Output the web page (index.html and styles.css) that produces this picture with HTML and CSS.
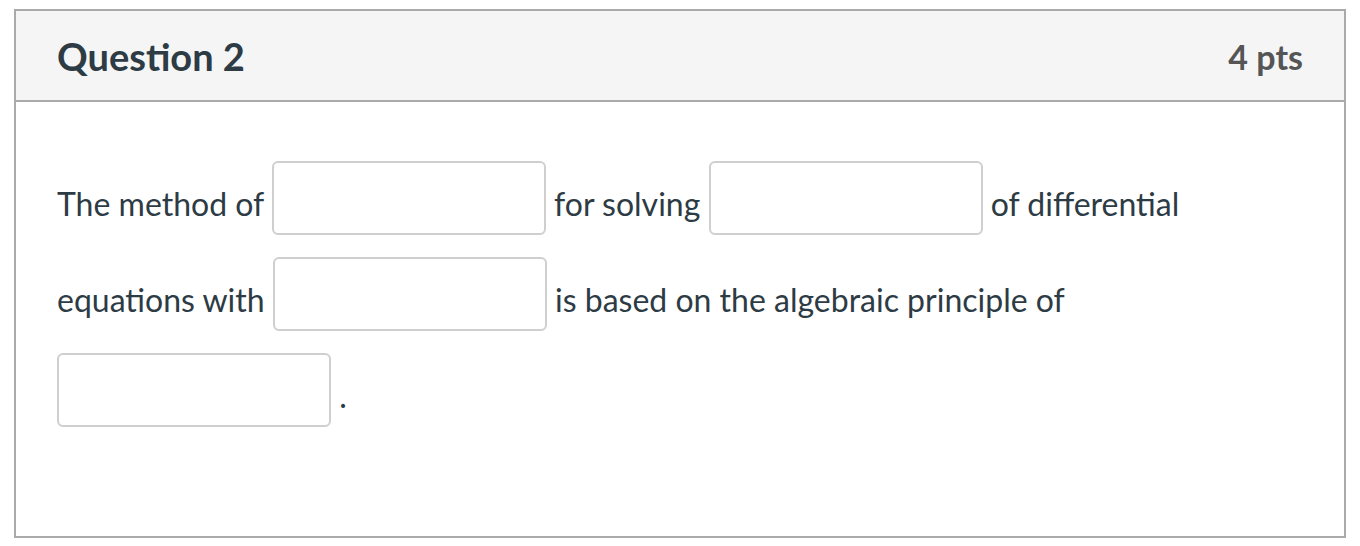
FILE: index.html
```html
<!DOCTYPE html>
<html lang="en">
<head>
<meta charset="utf-8">
<title>Question 2</title>
<link rel="stylesheet" href="styles.css">
</head>
<body>
<div class="question">
  <div class="question-header">
    <h2 class="question-name">Question 2</h2>
    <span class="question-points">4 pts</span>
  </div>
  <div class="question-body">
    <p class="question-text">The method of <input class="blank" type="text" aria-label="Blank 1"> for solving <input class="blank" type="text" aria-label="Blank 2"> of differential<br>equations with <input class="blank" type="text" aria-label="Blank 3"> is based on the algebraic principle of<br><input class="blank" type="text" aria-label="Blank 4"> .</p>
  </div>
</div>
</body>
</html>
```

FILE: styles.css
```css
html, body {
  margin: 0;
  padding: 0;
  background: #ffffff;
}

body {
  padding: 9px 14px 0;
  font-family: Lato, "Open Sans", "Liberation Sans", sans-serif;
  color: #2d3b45;
}

.question {
  border: 2px solid #aaaaaa;
  background: #ffffff;
}

.question-header {
  display: flex;
  align-items: center;
  justify-content: space-between;
  height: 89px;
  padding: 0 41px 0 41px;
  background: #f5f5f5;
  border-bottom: 2px solid #aaaaaa;
}

.question-name {
  margin: 0;
  font-size: 38px;
  font-weight: 700;
  color: #2d3b45;
  line-height: 1;
}

.question-points {
  margin-top: 3px;
  font-size: 34px;
  font-weight: 700;
  color: #555555;
  line-height: 1;
}

.question-body {
  padding: 48px 41px 98px;
}

.question-text {
  margin: 0;
  font-size: 32px;
  line-height: 38px;
}

.blank {
  box-sizing: border-box;
  width: 274px;
  margin: 11px 0;
  padding: 22px 10px 10px;
  font-family: inherit;
  font-size: 32px;
  line-height: 38px;
  color: #2d3b45;
  background: #ffffff;
  border: 2px solid #cfcfcf;
  border-radius: 6px;
  vertical-align: baseline;
  outline: none;
}
```
